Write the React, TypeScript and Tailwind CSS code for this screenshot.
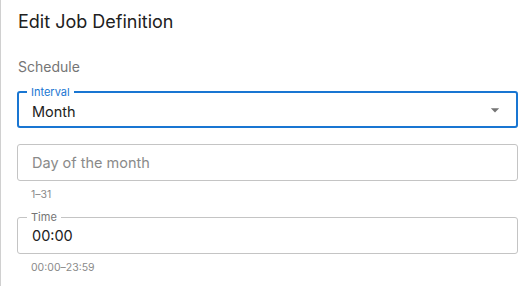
import React from "react";

const font = { fontFamily: "Inter, 'Noto Sans', sans-serif" };

function ArrowDropDown() {
  return (
    <svg viewBox="0 0 24 24" className="w-5 h-5 fill-[#757575]">
      <path d="M7 10l5 5 5-5z" />
    </svg>
  );
}

function OutlinedField({
  label,
  value,
  placeholder,
  focused,
  select,
  helper,
}: {
  label?: string;
  value?: string;
  placeholder?: string;
  focused?: boolean;
  select?: boolean;
  helper?: string;
}) {
  const borderColor = focused ? "border-[#1976d2] border-2" : "border-[#c4c4c4] border";
  return (
    <div className="flex flex-col">
      <div className={`relative h-[37px] rounded-[3px] ${borderColor} flex items-center`}>
        {label && (
          <span
            className={`absolute -top-[8px] px-[4px] bg-white text-[11px] leading-[14px] ${
              focused ? "text-[#1976d2] left-[8px]" : "text-[#757575] left-[9px]"
            }`}
          >
            {label}
          </span>
        )}
        <span
          className={`flex-1 text-[14.5px] ${focused ? "pl-[13px] pt-[4px]" : "pl-[14px]"} ${
            value ? "text-[#212121]" : "text-[#8a8a8a]"
          }`}
        >
          {value ?? placeholder}
        </span>
        {select && (
          <span className="pr-[11px] flex items-center">
            <ArrowDropDown />
          </span>
        )}
      </div>
      {helper && (
        <span className="text-[10.5px] text-[#8a8a8a] pl-[14px] mt-[8px] leading-[12px]">{helper}</span>
      )}
    </div>
  );
}

export default function App() {
  return (
    <div
      className="w-[531px] h-[286px] bg-white border-l border-[#d0d0d0] overflow-hidden pl-[16px] pr-[13px]"
      style={font}
    >
      <h2 className="text-[18px] leading-[24px] text-[#212121] pt-[10px] pl-[1px]">
        Edit Job Definition
      </h2>
      <div className="text-[14px] text-[#757575] mt-[24px] pl-[1px] leading-[18px]">Schedule</div>
      <div className="mt-[15px] flex flex-col">
        <OutlinedField label="Interval" value="Month" focused select />
        <div className="mt-[16px]">
          <OutlinedField placeholder="Day of the month" helper="1–31" />
        </div>
        <div className="mt-[16px]">
          <OutlinedField label="Time" value="00:00" helper="00:00–23:59" />
        </div>
      </div>
    </div>
  );
}
